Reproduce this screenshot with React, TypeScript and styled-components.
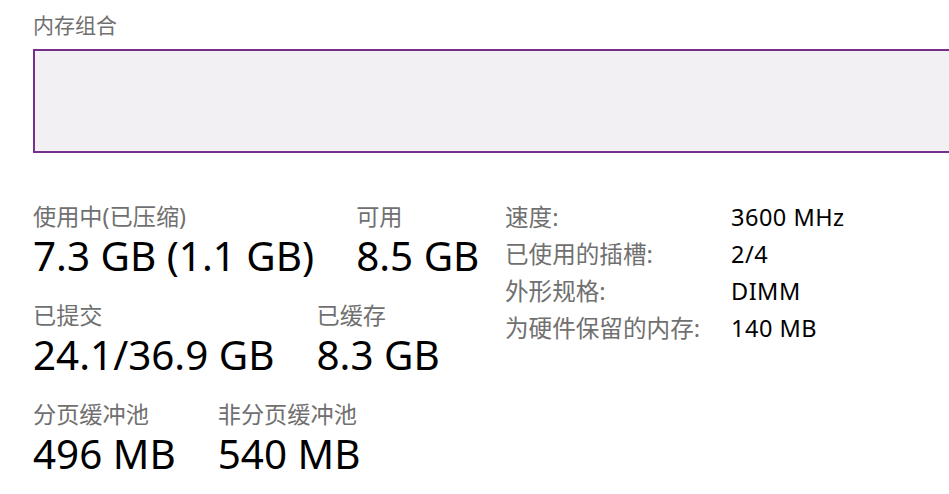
import React from 'react';
import styled, { createGlobalStyle } from 'styled-components';

interface Stat {
    label: string;
    value: string;
}

const statRows: Stat[][] = [
    [
        { label: '使用中(已压缩)', value: '7.3 GB (1.1 GB)' },
        { label: '可用', value: '8.5 GB' },
    ],
    [
        { label: '已提交', value: '24.1/36.9 GB' },
        { label: '已缓存', value: '8.3 GB' },
    ],
    [
        { label: '分页缓冲池', value: '496 MB' },
        { label: '非分页缓冲池', value: '540 MB' },
    ],
];

const specs: Stat[] = [
    { label: '速度:', value: '3600 MHz' },
    { label: '已使用的插槽:', value: '2/4' },
    { label: '外形规格:', value: 'DIMM' },
    { label: '为硬件保留的内存:', value: '140 MB' },
];

const App: React.FC = () => {
    return (
        <Page>
            <GlobalStyle />
            <Title>内存组合</Title>
            <Composition />
            <Details>
                <Stats>
                    {statRows.map((row, i) => (
                        <StatRow key={i}>
                            {row.map((stat) => (
                                <StatBox key={stat.label}>
                                    <StatLabel>{stat.label}</StatLabel>
                                    <StatValue>{stat.value}</StatValue>
                                </StatBox>
                            ))}
                        </StatRow>
                    ))}
                </Stats>
                <Specs>
                    {specs.map((spec) => (
                        <React.Fragment key={spec.label}>
                            <SpecLabel>{spec.label}</SpecLabel>
                            <SpecValue>{spec.value}</SpecValue>
                        </React.Fragment>
                    ))}
                </Specs>
            </Details>
        </Page>
    );
};

export default App;

const GlobalStyle = createGlobalStyle`
    html, body {
        margin: 0;
        padding: 0;
        background: #ffffff;
        overflow: hidden;
    }
    * {
        box-sizing: border-box;
    }
`;

const Page = styled.div`
    width: 949px;
    height: 494px;
    overflow: hidden;
    padding: 11px 0 0 33px;
    font-family: 'Noto Sans', 'Noto Sans CJK SC', sans-serif;
`;

const Title = styled.div`
    font-size: 21px;
    line-height: 29px;
    color: #707070;
`;

const Composition = styled.div`
    margin-top: 9px;
    width: 940px;
    height: 104px;
    border: 2px solid #75308c;
    background-color: #f2f0f3;
`;

const Details = styled.div`
    display: flex;
    margin-top: 49px;
`;

const Stats = styled.div`
    display: flex;
    flex-direction: column;
    gap: 21px;
    width: 472px;
`;

const StatRow = styled.div`
    display: flex;
    gap: 42px;
`;

const StatBox = styled.div`
    display: flex;
    flex-direction: column;
`;

const StatLabel = styled.div`
    font-size: 23.2px;
    line-height: 28px;
    color: #707070;
    white-space: nowrap;
`;

const StatValue = styled.div`
    margin-top: 2px;
    font-size: 40.4px;
    line-height: 48px;
    color: #000000;
    white-space: nowrap;
`;

const Specs = styled.div`
    display: grid;
    grid-template-columns: 226px auto;
    grid-auto-rows: 37px;
    align-content: start;
    margin-top: -3px;
`;

const SpecLabel = styled.div`
    font-size: 23.6px;
    line-height: 37px;
    color: #707070;
    white-space: nowrap;
`;

const SpecValue = styled.div`
    font-size: 23.5px;
    line-height: 37px;
    letter-spacing: 0.5px;
    color: #000000;
    white-space: nowrap;
`;
